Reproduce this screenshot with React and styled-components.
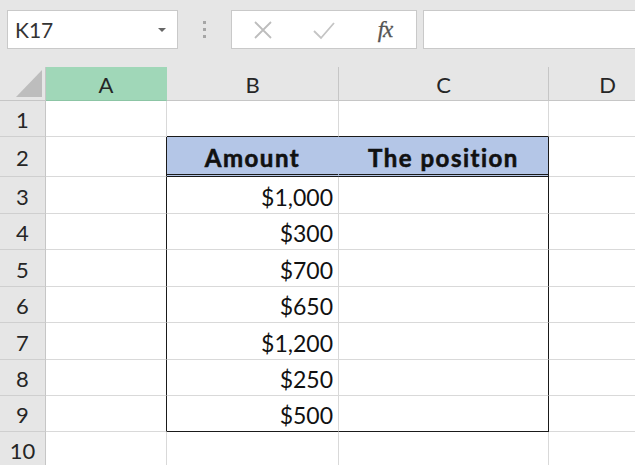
import React from "react";
import styled, { createGlobalStyle } from "styled-components";

const GlobalStyle = createGlobalStyle`
  html, body {
    margin: 0;
    padding: 0;
    background: #e6e6e6;
    overflow: hidden;
  }
  body {
    font-family: Lato, "Noto Sans", sans-serif;
  }
`;

const Window = styled.div`
  width: 635px;
  height: 465px;
  overflow: hidden;
  background: #e6e6e6;
`;

const FormulaBar = styled.div`
  display: flex;
  align-items: center;
  height: 39px;
  padding: 10px 0 18px 7px;
`;

const NameBox = styled.div`
  box-sizing: border-box;
  width: 171px;
  height: 39px;
  background: #fff;
  border: 1px solid #c9c9c9;
  display: flex;
  align-items: center;
  justify-content: space-between;
  padding: 0 11px 0 7px;
  font-size: 21px;
  color: #333;
`;

const Caret = styled.span`
  width: 0;
  height: 0;
  border-left: 4px solid transparent;
  border-right: 4px solid transparent;
  border-top: 4px solid #666;
`;

const Grip = styled.div`
  width: 53px;
  display: flex;
  flex-direction: column;
  align-items: center;
  gap: 4px;
  span {
    width: 3px;
    height: 3px;
    background: #a6a6a6;
  }
`;

const ButtonBox = styled.div`
  box-sizing: border-box;
  width: 186px;
  height: 39px;
  background: #fff;
  border: 1px solid #c9c9c9;
  display: flex;
  align-items: center;
  padding-left: 20px;
`;

const BarButton = styled.div`
  width: ${(p) => p.$w}px;
  display: flex;
  align-items: center;
  justify-content: center;
`;

const Fx = styled.span`
  font-family: "Liberation Serif", serif;
  font-style: italic;
  font-size: 23px;
  color: #555;
  letter-spacing: -1px;
  -webkit-text-stroke: 0.3px #555;
`;

const FormulaInput = styled.div`
  box-sizing: border-box;
  flex: 1;
  height: 39px;
  margin-left: 6px;
  background: #fff;
  border: 1px solid #c9c9c9;
  border-right: none;
`;

const Sheet = styled.div`
  display: grid;
  grid-template-columns: 46px 121px 172px 210px 118px;
  background: #fff;
`;

const Corner = styled.div`
  height: 34px;
  box-sizing: border-box;
  background: #e6e6e6;
  border-right: 1px solid #c6c6c6;
  border-bottom: 1px solid #c6c6c6;
  display: flex;
  align-items: flex-end;
  justify-content: flex-end;
  padding: 0 3px 3px 0;
`;

const ColHead = styled.div`
  height: 34px;
  box-sizing: border-box;
  background: ${(p) => (p.$selected ? "#a0d7b8" : "#e6e6e6")};
  border-right: 1px solid ${(p) => (p.$selected ? "#a0d7b8" : "#c6c6c6")};
  border-bottom: 1px solid ${(p) => (p.$selected ? "#8cc5a5" : "#c6c6c6")};
  display: flex;
  align-items: center;
  justify-content: center;
  padding-top: 2px;
  font-size: 22px;
  color: #262626;
`;

const RowHead = styled.div`
  height: ${(p) => p.$h}px;
  box-sizing: border-box;
  background: #e6e6e6;
  border-right: 1px solid #c6c6c6;
  border-bottom: 1px solid #cfcfcf;
  display: flex;
  align-items: center;
  justify-content: center;
  padding-top: 2px;
  font-size: 22px;
  color: #262626;
`;

const Cell = styled.div`
  height: ${(p) => p.$h}px;
  box-sizing: border-box;
  background: ${(p) => p.$fill || "#fff"};
  border-right: 1px solid ${(p) => p.$right || "#d9d9d9"};
  border-bottom: ${(p) => p.$bottom || "1px solid #d9d9d9"};
  display: flex;
  align-items: center;
  justify-content: ${(p) => p.$align || "flex-start"};
  padding: 3px 5px 0;
  font-size: ${(p) => (p.$bold ? 24 : 23)}px;
  color: #111;
  font-weight: ${(p) => (p.$bold ? 700 : 400)};
  letter-spacing: ${(p) => (p.$bold ? "1.5px" : "0")};
  -webkit-text-stroke: ${(p) => (p.$bold ? "0.6px #111" : "0")};
`;

const BLACK = "#1a1a1a";
const HEAD_FILL = "#b4c6e7";

const amounts = ["$1,000", "$300", "$700", "$650", "$1,200", "$250", "$500"];
const heights = [36, 40, 37, 36, 37, 36, 37, 36, 36, 36];

const rows = heights.map((h, i) => {
  const n = i + 1;
  if (n === 1) return { n, h, b: "", c: "", kind: "above" };
  if (n === 2) return { n, h, b: "Amount", c: "The position", kind: "head" };
  if (n <= 9) return { n, h, b: amounts[n - 3], c: "", kind: n === 9 ? "last" : "body" };
  return { n, h, b: "", c: "", kind: "below" };
});

const inTable = (kind) => kind === "head" || kind === "body" || kind === "last";

const Dismiss = () => (
  <svg width="22" height="22" viewBox="0 0 22 22">
    <path d="M3 3 L19 19 M19 3 L3 19" stroke="#bdbdbd" strokeWidth="1.8" fill="none" />
  </svg>
);

const Confirm = () => (
  <svg width="24" height="22" viewBox="0 0 24 22">
    <path d="M2 12 L9 19 L22 4" stroke="#c4c4c4" strokeWidth="1.8" fill="none" />
  </svg>
);

const CornerMark = () => (
  <svg width="26" height="27" viewBox="0 0 26 27">
    <path d="M26 0 L26 27 L0 27 Z" fill="#bdbdbd" />
  </svg>
);

const App = () => {
  return (
    <Window>
      <GlobalStyle />
      <FormulaBar>
        <NameBox>
          K17
          <Caret />
        </NameBox>
        <Grip>
          <span />
          <span />
          <span />
        </Grip>
        <ButtonBox>
          <BarButton $w={22}>
            <Dismiss />
          </BarButton>
          <BarButton $w={100}>
            <Confirm />
          </BarButton>
          <BarButton $w={22}>
            <Fx>fx</Fx>
          </BarButton>
        </ButtonBox>
        <FormulaInput />
      </FormulaBar>
      <Sheet>
        <Corner>
          <CornerMark />
        </Corner>
        <ColHead $selected>A</ColHead>
        <ColHead>B</ColHead>
        <ColHead>C</ColHead>
        <ColHead>D</ColHead>
        {rows.map((r) => {
          const t = inTable(r.kind);
          const bottom =
            r.kind === "head"
              ? `3px double ${BLACK}`
              : r.kind === "last" || r.kind === "above"
              ? `1px solid ${BLACK}`
              : undefined;
          return (
            <React.Fragment key={r.n}>
              <RowHead $h={r.h}>{r.n}</RowHead>
              <Cell $h={r.h} $right={t ? BLACK : undefined} />
              <Cell
                $h={r.h}
                $fill={r.kind === "head" ? HEAD_FILL : undefined}
                $right={r.kind === "head" ? HEAD_FILL : undefined}
                $bottom={bottom}
                $align={r.kind === "head" ? "center" : "flex-end"}
                $bold={r.kind === "head"}
              >
                {r.b}
              </Cell>
              <Cell
                $h={r.h}
                $fill={r.kind === "head" ? HEAD_FILL : undefined}
                $right={t ? BLACK : undefined}
                $bottom={bottom}
                $align="center"
                $bold={r.kind === "head"}
              >
                {r.c}
              </Cell>
              <Cell $h={r.h} />
            </React.Fragment>
          );
        })}
      </Sheet>
    </Window>
  );
};

export default App;
